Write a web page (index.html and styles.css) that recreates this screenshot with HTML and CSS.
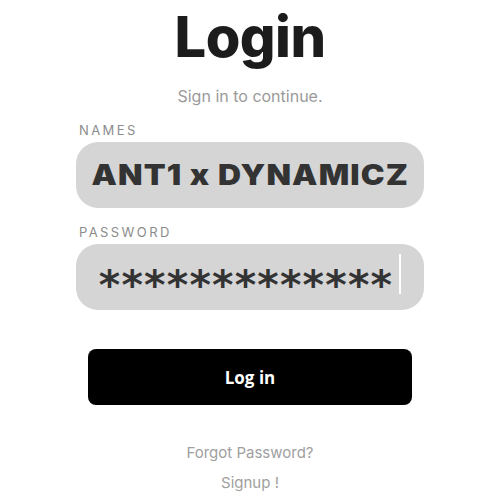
FILE: index.html
```html
<!DOCTYPE html>
<html lang="en">
<head>
    <meta charset="UTF-8">
    <meta name="viewport" content="width=device-width, initial-scale=1.0">
    <title>Login</title>
    <link rel="stylesheet" href="styles.css">
</head>
<body>
    <div class="login">
        <h1 class="title">Login</h1>
        <p class="subtitle">Sign in to continue.</p>

        <label class="label" for="names">NAMES</label>
        <div class="field" id="names">
            <span class="name-value">ANT1 x DYNAMICZ</span>
        </div>

        <label class="label label-password" for="password">PASSWORD</label>
        <div class="field" id="password">
            <span class="password-value">*************</span>
            <span class="cursor"></span>
        </div>

        <button class="button">Log in</button>

        <a class="link link-forgot" href="#">Forgot Password?</a>
        <a class="link link-signup" href="#">Signup !</a>
    </div>
</body>
</html>
```

FILE: styles.css
```css
body {
    margin: 0;
    padding: 0;
    background: #fff;
    font-family: 'Inter', 'Liberation Sans', sans-serif;
    color: #333;
}

.login {
    width: 348px;
    margin: 0 auto;
    padding-top: 9px;
    display: flex;
    flex-direction: column;
}

.title {
    margin: 0;
    font-size: 56px;
    line-height: 56px;
    font-weight: 800;
    color: #1c1c1c;
    text-align: center;
    letter-spacing: -0.5px;
}

.subtitle {
    margin: 21px 0 0;
    font-size: 16px;
    line-height: 20px;
    color: #9a9a9a;
    text-align: center;
}

.label {
    display: block;
    margin: 16px 0 0 3px;
    font-size: 13px;
    line-height: 16px;
    letter-spacing: 2.4px;
    color: #8c8c8c;
}

.label-password {
    margin-top: 16px;
}

.field {
    margin-top: 4px;
    height: 66px;
    border-radius: 22px;
    background-color: #d5d5d5;
    display: flex;
    justify-content: center;
    align-items: center;
}

.name-value {
    display: inline-block;
    font-size: 28px;
    font-weight: 900;
    letter-spacing: 1px;
    color: #333;
    transform: scaleX(1.14);
}

.password-value {
    font-family: 'DejaVu Sans', sans-serif;
    font-size: 41px;
    font-weight: 700;
    letter-spacing: 1.2px;
    color: #333;
    padding-top: 16px;
}

.cursor {
    width: 2px;
    height: 40px;
    margin-left: 6px;
    margin-bottom: 6px;
    background-color: #fff;
}

.button {
    margin: 39px auto 0;
    width: 324px;
    height: 56px;
    border: none;
    border-radius: 8px;
    background-color: #000;
    color: #fff;
    font-family: 'Open Sans', 'Liberation Sans', sans-serif;
    font-size: 17px;
    font-weight: 700;
}

.link {
    display: block;
    font-size: 15px;
    line-height: 20px;
    color: #a0a0a0;
    text-align: center;
    text-decoration: none;
}

.link-forgot {
    margin-top: 38px;
}

.link-signup {
    margin-top: 10px;
}
```
